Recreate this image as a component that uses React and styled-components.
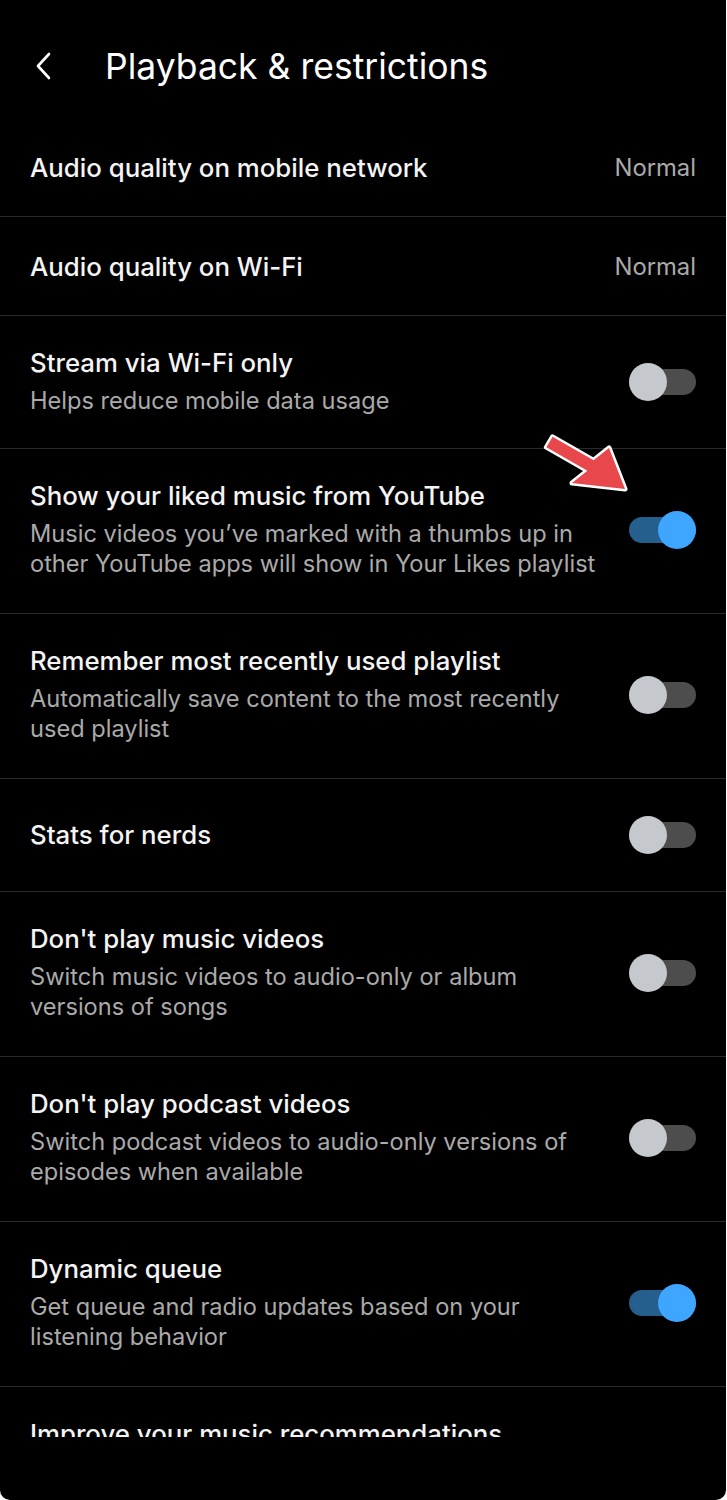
import React from "react";
import styled, { createGlobalStyle } from "styled-components";

const Global = createGlobalStyle`
  html, body { margin: 0; padding: 0; background: #ffffff; }
  body { font-family: Inter, Roboto, "Noto Sans", "Liberation Sans", sans-serif; -webkit-font-smoothing: antialiased; }
  * { box-sizing: border-box; }
`;

const Screen = styled.div`
  width: 726px;
  height: 1500px;
  background: #000;
  color: #fff;
  border-radius: 0 0 10px 10px;
  display: flex;
  flex-direction: column;
  overflow: hidden;
`;

const Header = styled.header`
  height: 118px;
  flex: none;
  display: flex;
  align-items: center;
  padding: 14px 0 0 30px;
`;

const BackButton = styled.button`
  width: 28px;
  height: 40px;
  padding: 0;
  margin: 0 47px 0 0;
  background: none;
  border: 0;
  display: flex;
  align-items: center;
  justify-content: center;
  color: #fff;
`;

const Title = styled.h1`
  margin: 0;
  font-size: 35.5px;
  font-weight: 400;
  letter-spacing: 0;
  color: #fff;
`;

const List = styled.div`
  height: 1319px;
  flex: none;
  overflow: hidden;
`;

const Row = styled.div`
  position: relative;
  display: flex;
  align-items: center;
  gap: 20px;
  padding: ${(p) => p.$pad};
  border-bottom: 1px solid #2a2a2a;
`;

const Texts = styled.div`
  flex: 1;
  min-width: 0;
  display: flex;
  flex-direction: column;
  gap: 8px;
`;

const RowTitle = styled.div`
  font-size: 25.8px;
  line-height: 30px;
  font-weight: 500;
  color: #f4f4f4;
  white-space: nowrap;
`;

const RowSub = styled.div`
  font-size: 23.6px;
  line-height: 30px;
  font-weight: 400;
  color: #aaaaaa;
  white-space: nowrap;
`;

const Value = styled.div`
  font-size: 23.8px;
  line-height: 30px;
  color: #aaaaaa;
  flex: none;
`;

const Switch = styled.div`
  position: relative;
  flex: none;
  width: 67px;
  height: 38px;
  display: flex;
  align-items: center;
`;

const Track = styled.div`
  width: 67px;
  height: 26px;
  border-radius: 13px;
  background: ${(p) => (p.$on ? "#255f8d" : "#4d4d4d")};
`;

const Knob = styled.div`
  position: absolute;
  top: 0;
  left: ${(p) => (p.$on ? "29px" : "0")};
  width: 38px;
  height: 38px;
  border-radius: 50%;
  background: ${(p) => (p.$on ? "#3ea6ff" : "#c5c8cc")};
`;

const Pointer = styled.svg`
  position: absolute;
  left: -87px;
  top: -80px;
  width: 90px;
  height: 65px;
  overflow: visible;
`;

const Toggle = ({ on, arrow }) => (
  <Switch>
    <Track $on={on} />
    <Knob $on={on} />
    {arrow && (
      <Pointer viewBox="0 0 90 65">
        <polygon
          points="10.6,5.8 51.6,29.3 67,17 83,58 30,52 45.4,39.7 4.4,16.2"
          fill="#e8484c"
          stroke="#ffffff"
          strokeWidth="5"
          strokeLinejoin="round"
          paintOrder="stroke"
        />
      </Pointer>
    )}
  </Switch>
);

const rows = [
  { title: "Audio quality on mobile network", value: "Normal" },
  { title: "Audio quality on Wi-Fi", value: "Normal" },
  { title: "Stream via Wi-Fi only", sub: ["Helps reduce mobile data usage"], on: false },
  {
    title: "Show your liked music from YouTube",
    sub: ["Music videos you\u2019ve marked with a thumbs up in", "other YouTube apps will show in Your Likes playlist"],
    on: true,
    arrow: true,
  },
  {
    title: "Remember most recently used playlist",
    sub: ["Automatically save content to the most recently", "used playlist"],
    on: false,
  },
  { title: "Stats for nerds", on: false },
  {
    title: "Don't play music videos",
    sub: ["Switch music videos to audio-only or album", "versions of songs"],
    on: false,
  },
  {
    title: "Don't play podcast videos",
    sub: ["Switch podcast videos to audio-only versions of", "episodes when available"],
    on: false,
  },
  {
    title: "Dynamic queue",
    sub: ["Get queue and radio updates based on your", "listening behavior"],
    on: true,
  },
  {
    title: "Improve your music recommendations",
    sub: ["Let YouTube Music learn from what you play", "to improve your recommendations"],
    on: true,
  },
];

const padFor = (r) => {
  if (!r.sub && r.value) return "35px 30px 33px";
  if (!r.sub) return "37px 30px 37px";
  if (r.sub.length === 1) return "32px 30px 32px";
  return "32px 30px 34px";
};

export default function App() {
  return (
    <>
      <Global />
      <Screen>
        <Header>
          <BackButton aria-label="Back">
            <svg width="20" height="28" viewBox="0 0 20 28" fill="none">
              <polyline points="15,2 4,14 15,26" stroke="#fff" strokeWidth="2.6" strokeLinecap="round" strokeLinejoin="round" />
            </svg>
          </BackButton>
          <Title>Playback &amp; restrictions</Title>
        </Header>
        <List>
          {rows.map((r) => (
            <Row key={r.title} $pad={padFor(r)}>
              <Texts>
                <RowTitle>{r.title}</RowTitle>
                {r.sub && (
                  <div>
                    {r.sub.map((s) => (
                      <RowSub key={s}>{s}</RowSub>
                    ))}
                  </div>
                )}
              </Texts>
              {r.value && <Value>{r.value}</Value>}
              {r.on !== undefined && <Toggle on={r.on} arrow={r.arrow} />}
            </Row>
          ))}
        </List>
      </Screen>
    </>
  );
}
